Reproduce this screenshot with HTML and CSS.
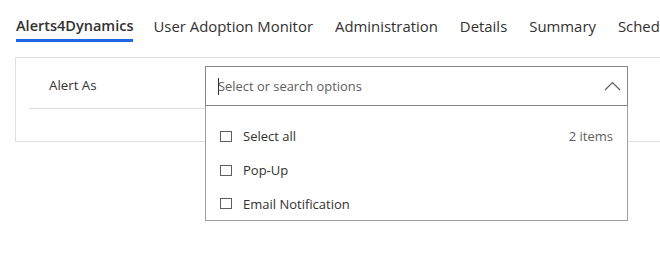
FILE: index.html
```html
<!DOCTYPE html>
<html>
<head>
<meta charset="utf-8">
<link rel="stylesheet" href="styles.css">
</head>
<body>
<nav class="tabs">
  <span class="tab active">Alerts4Dynamics</span>
  <span class="tab">User Adoption Monitor</span>
  <span class="tab">Administration</span>
  <span class="tab">Details</span>
  <span class="tab">Summary</span>
  <span class="tab">Schedule</span>
</nav>
<section class="card">
  <div class="row">
    <label class="label">Alert As</label>
    <div class="combo">
      <div class="input">
        <span class="caret"></span><span class="placeholder">Select or search options</span>
        <svg class="chev" width="17" height="10" viewBox="0 0 17 10"><path d="M1 9 L8.5 1.5 L16 9" fill="none" stroke="#605e5c" stroke-width="1.2"/></svg>
      </div>
      <div class="list">
        <div class="item"><span class="box"></span><span class="text">Select all</span><span class="count">2 items</span></div>
        <div class="item"><span class="box"></span><span class="text">Pop-Up</span></div>
        <div class="item last"><span class="box"></span><span class="text">Email Notification</span></div>
      </div>
    </div>
  </div>
</section>
</body>
</html>
```
FILE: styles.css
```css
html, body { margin: 0; padding: 0; background: #fff; }
body { font-family: "Open Sans", "Noto Sans", sans-serif; color: #323130; overflow: hidden; width: 660px; height: 261px; }
.tabs { display: flex; gap: 22px; padding: 14px 0 0 16px; height: 44px; box-sizing: border-box; white-space: nowrap; }
.tab { font-size: 14.9px; line-height: 24px; height: 28px; box-sizing: border-box; color: #323130; }
.tab:first-child { margin-right: -2px; }
.tab.active { font-size: 14.5px; font-weight: 600; border-bottom: 3px solid #2266e3; }
.card { margin: 13px 0 0 15px; border: 1px solid #e1dfdd; border-right: none; height: 85px; box-sizing: border-box; }
.row { display: flex; margin-left: 13px; padding-top: 8px; height: 51px; box-sizing: border-box; border-bottom: 1px solid #e1dfdd; width: 599px; }
.label { width: 176px; padding-left: 20px; box-sizing: border-box; font-size: 13.3px; line-height: 38px; }
.combo { position: relative; width: 423px; }
.input { height: 40px; border: 1px solid #8a8886; box-sizing: border-box; display: flex; align-items: center; padding-left: 12px; background: #fff; }
.caret { width: 1px; height: 17px; background: #323130; margin-right: -1px; }
.placeholder { font-size: 12.9px; color: #605e5c; flex: 1; }
.chev { margin-right: 6px; }
.list { position: absolute; left: 0; top: 40px; width: 423px; height: 115px; box-sizing: border-box; border: 1px solid #a19f9d; border-top: none; padding-top: 13px; background: #fff; }
.item { height: 34px; display: flex; align-items: center; padding-left: 14px; padding-right: 14px; font-size: 13px; }
.item.last { height: 33px; }
.box { width: 10px; height: 9px; border: 1px solid #605e5c; margin-right: 11px; }
.text { flex: 1; color: #323130; }
.count { color: #605e5c; }
```
